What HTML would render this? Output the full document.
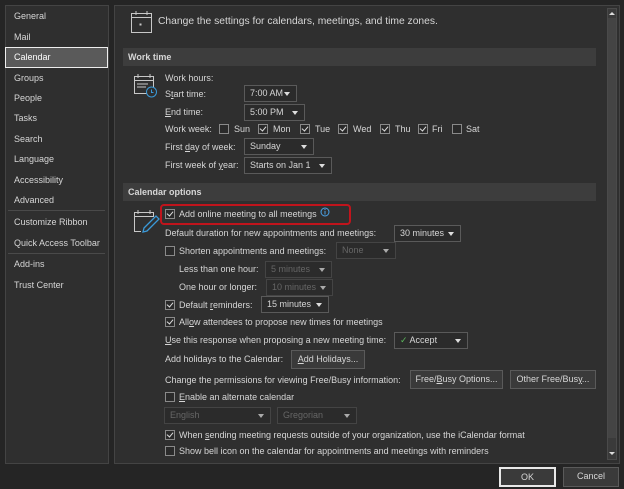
<!DOCTYPE html>
<html><head><meta charset="utf-8"><style>
*{margin:0;padding:0;box-sizing:border-box}
body{width:624px;height:489px;background:#252525;font-family:"Liberation Sans",sans-serif;font-size:9px;color:#d6d6d6;position:relative;overflow:hidden}
.a{position:absolute;white-space:nowrap;line-height:12px}
.panel{position:absolute;background:#2f2f2f;border:1px solid #444}
.hdr{position:absolute;left:123px;width:473px;height:18px;background:#3d3d3d;font-weight:bold;padding:3px 5px;line-height:12px}
.cb{position:absolute;width:10px;height:10px;border:1px solid #8a8a8a;background:#2a2a2a}
.cb.c::after{content:"";position:absolute;left:2px;top:0px;width:3px;height:5px;border:solid #ddd;border-width:0 1.3px 1.3px 0;transform:rotate(40deg)}
.dd{position:absolute;border:1px solid #5a5a5a;background:#2b2b2b;padding:0 0 0 5px;line-height:15px;height:17px}
.dd::after{content:"";position:absolute;right:6px;top:6px;border:3.5px solid transparent;border-top:4px solid #ddd;border-bottom:0}
.dd.dis{color:#666;border-color:#444}
.dd.dis::after{border-top-color:#aaa}
.btn{position:absolute;border:1px solid #5a5a5a;background:#3a3a3a;text-align:center;line-height:17px;height:19px}
u{text-decoration:underline}
</style></head><body>
<div class="panel" style="left:5px;top:5px;width:104px;height:459px"></div>
<div class="a" style="left:14px;top:10px">General</div>
<div class="a" style="left:14px;top:31px">Mail</div>
<div style="position:absolute;left:5px;top:47px;width:103px;height:21px;background:#5a5a5a;border:1px solid #eee"></div>
<div class="a" style="left:14px;top:51px;color:#fff">Calendar</div>
<div class="a" style="left:14px;top:72px">Groups</div>
<div class="a" style="left:14px;top:92px">People</div>
<div class="a" style="left:14px;top:112px">Tasks</div>
<div class="a" style="left:14px;top:133px">Search</div>
<div class="a" style="left:14px;top:153px">Language</div>
<div class="a" style="left:14px;top:174px">Accessibility</div>
<div class="a" style="left:14px;top:194px">Advanced</div>
<div style="position:absolute;left:8px;top:210px;width:97px;height:1px;background:#4a4a4a"></div>
<div class="a" style="left:14px;top:216px">Customize Ribbon</div>
<div class="a" style="left:14px;top:237px">Quick Access Toolbar</div>
<div style="position:absolute;left:8px;top:253px;width:97px;height:1px;background:#4a4a4a"></div>
<div class="a" style="left:14px;top:258px">Add-ins</div>
<div class="a" style="left:14px;top:279px">Trust Center</div>

<div class="panel" style="left:114px;top:5px;width:506px;height:459px"></div>
<div style="position:absolute;left:607px;top:8px;width:10px;height:452px;background:#3a3a3a;border:1px solid #4a4a4a"></div>
<div style="position:absolute;left:608px;top:18px;width:8px;height:420px;background:#444"></div>
<div style="position:absolute;left:609px;top:12px;border:3px solid transparent;border-bottom:3px solid #ddd;border-top:0"></div>
<div style="position:absolute;left:609px;top:452px;border:3px solid transparent;border-top:3px solid #ddd;border-bottom:0"></div>

<svg style="position:absolute;left:130px;top:10px" width="24" height="24" viewBox="0 0 24 24" fill="none" stroke="#c8c8c8" stroke-width="1"><rect x="1.5" y="3.5" width="20" height="19"/><line x1="1.5" y1="7.5" x2="21.5" y2="7.5"/><line x1="6" y1="1" x2="6" y2="5"/><line x1="17" y1="1" x2="17" y2="5"/><rect x="10" y="14" width="1" height="1" fill="#c8c8c8"/></svg>
<div class="a" style="left:158px;top:16px;font-size:10.3px">Change the settings for calendars, meetings, and time zones.</div>

<div class="hdr" style="top:48px">Work time</div>
<svg style="position:absolute;left:133px;top:73px" width="26" height="26" viewBox="0 0 26 26" fill="none" stroke="#c8c8c8" stroke-width="1"><rect x="1.5" y="3.5" width="19" height="17"/><line x1="1.5" y1="7.5" x2="20.5" y2="7.5"/><line x1="5" y1="1" x2="5" y2="5"/><line x1="17" y1="1" x2="17" y2="5"/><line x1="4" y1="11" x2="15" y2="11"/><line x1="4" y1="14" x2="13" y2="14"/><circle cx="18.5" cy="19" r="5" fill="#2f2f2f" stroke="#3a9ad9"/><path d="M18.5 16.5v3h2" stroke="#3a9ad9"/></svg>
<div class="a" style="left:165px;top:72px">Work hours:</div>
<div class="a" style="left:165px;top:88px">S<u>t</u>art time:</div>
<div class="dd" style="left:244px;top:85px;width:53px">7:00 AM</div>
<div class="a" style="left:165px;top:106px"><u>E</u>nd time:</div>
<div class="dd" style="left:244px;top:104px;width:61px">5:00 PM</div>
<div class="a" style="left:165px;top:123px">Work week:</div>
<div class="cb" style="left:219px;top:124px"></div><div class="a" style="left:234px;top:123px">Sun</div>
<div class="cb c" style="left:258px;top:124px"></div><div class="a" style="left:273px;top:123px">Mon</div>
<div class="cb c" style="left:300px;top:124px"></div><div class="a" style="left:315px;top:123px">Tue</div>
<div class="cb c" style="left:338px;top:124px"></div><div class="a" style="left:353px;top:123px">Wed</div>
<div class="cb c" style="left:380px;top:124px"></div><div class="a" style="left:395px;top:123px">Thu</div>
<div class="cb c" style="left:418px;top:124px"></div><div class="a" style="left:432px;top:123px">Fri</div>
<div class="cb" style="left:452px;top:124px"></div><div class="a" style="left:466px;top:123px">Sat</div>
<div class="a" style="left:165px;top:141px">First <u>d</u>ay of week:</div>
<div class="dd" style="left:244px;top:138px;width:70px">Sunday</div>
<div class="a" style="left:165px;top:159px">First week of <u>y</u>ear:</div>
<div class="dd" style="left:244px;top:157px;width:88px">Starts on Jan 1</div>

<div class="hdr" style="top:183px">Calendar options</div>
<svg style="position:absolute;left:133px;top:209px" width="28" height="26" viewBox="0 0 28 26" fill="none" stroke="#c8c8c8" stroke-width="1"><path d="M20.5 8V3.5H1.5V22.5H8"/><line x1="1.5" y1="7.5" x2="20.5" y2="7.5"/><line x1="5" y1="1" x2="5" y2="5"/><line x1="17" y1="1" x2="17" y2="5"/><path d="M10 23l1-4 12-12 3 3-12 12z" stroke="#3a9ad9" stroke-width="1.3"/></svg>
<div style="position:absolute;left:160px;top:204px;width:191px;height:21px;border:2px solid #c0141c;border-radius:4px"></div>
<div class="cb c" style="left:165px;top:209px"></div>
<div class="a" style="left:179px;top:208px">Add online meeting to all meetings</div>
<svg style="position:absolute;left:320px;top:207px" width="10" height="10"><circle cx="5" cy="5" r="4" fill="none" stroke="#4aa3e8"/><line x1="5" y1="4" x2="5" y2="7.5" stroke="#4aa3e8"/><circle cx="5" cy="2.6" r=".6" fill="#4aa3e8"/></svg>
<div class="a" style="left:165px;top:227px">Default duration for new appointments and meetings:</div>
<div class="dd" style="left:394px;top:225px;width:67px">30 minutes</div>
<div class="cb" style="left:165px;top:246px"></div>
<div class="a" style="left:179px;top:245px">Shorten appointments and meetings:</div>
<div class="dd dis" style="left:336px;top:242px;width:60px">None</div>
<div class="a" style="left:179px;top:263px">Less than one hour:</div>
<div class="dd dis" style="left:265px;top:261px;width:67px">5 minutes</div>
<div class="a" style="left:179px;top:281px">One hour or longer:</div>
<div class="dd dis" style="left:266px;top:279px;width:67px">10 minutes</div>
<div class="cb c" style="left:165px;top:300px"></div>
<div class="a" style="left:179px;top:299px">Default <u>r</u>eminders:</div>
<div class="dd" style="left:261px;top:296px;width:68px">15 minutes</div>
<div class="cb c" style="left:165px;top:317px"></div>
<div class="a" style="left:179px;top:316px">All<u>o</u>w attendees to propose new times for meetings</div>
<div class="a" style="left:165px;top:334px"><u>U</u>se this response when proposing a new meeting time:</div>
<div class="dd" style="left:394px;top:332px;width:74px"><span style="color:#5cb85c">✓</span> Accept</div>
<div class="a" style="left:165px;top:353px">Add holidays to the Calendar:</div>
<div class="btn" style="left:291px;top:350px;width:74px"><u>A</u>dd Holidays...</div>
<div class="a" style="left:165px;top:374px">Change the permissions for viewing Free/Busy information:</div>
<div class="btn" style="left:410px;top:370px;width:93px">Free/<u>B</u>usy Options...</div>
<div class="btn" style="left:510px;top:370px;width:86px">Other Free/Bus<u>y</u>...</div>
<div class="cb" style="left:165px;top:392px"></div>
<div class="a" style="left:179px;top:391px"><u>E</u>nable an alternate calendar</div>
<div class="dd dis" style="left:164px;top:407px;width:107px">English</div>
<div class="dd dis" style="left:277px;top:407px;width:80px">Gregorian</div>
<div class="cb c" style="left:165px;top:430px"></div>
<div class="a" style="left:179px;top:429px">When <u>s</u>ending meeting requests outside of your organization, use the iCalendar format</div>
<div class="cb" style="left:165px;top:446px"></div>
<div class="a" style="left:179px;top:445px">Show bell icon on the calendar for appointments and meetings with reminders</div>

<div class="btn" style="left:499px;top:467px;width:57px;height:20px;border:2px solid #e8e8e8;line-height:16px">OK</div>
<div class="btn" style="left:563px;top:467px;width:56px;height:20px">Cancel</div>
</body></html>
